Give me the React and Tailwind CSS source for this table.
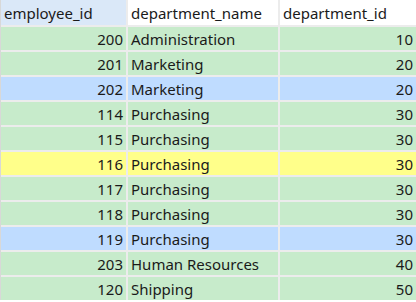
const rows = [
  [200, 'Administration', 10, 'g'],
  [201, 'Marketing', 20, 'g'],
  [202, 'Marketing', 20, 'b'],
  [114, 'Purchasing', 30, 'g'],
  [115, 'Purchasing', 30, 'g'],
  [116, 'Purchasing', 30, 'y'],
  [117, 'Purchasing', 30, 'g'],
  [118, 'Purchasing', 30, 'g'],
  [119, 'Purchasing', 30, 'b'],
  [203, 'Human Resources', 40, 'g'],
  [120, 'Shipping', 50, 'g'],
]

const bg = { g: 'bg-[#c7ebcb]', b: 'bg-[#bfdcff]', y: 'bg-[#ffff8a]' }

export default function App() {
  return (
    <div className="w-[416px] h-[302px] bg-white overflow-hidden text-[15px] text-[#1a1a1a]" style={{ fontFamily: '"Noto Sans", "Liberation Sans", sans-serif' }}>
      <div className="grid grid-cols-[125px_150px_1fr] gap-[2px] bg-[#ececec] border-l border-[#d8d8d8]">
        <div className="h-[25px] px-[3px] pt-[1px] flex items-center bg-[#dae8f8]">employee_id</div>
        <div className="h-[25px] px-[3px] pt-[1px] flex items-center bg-white">department_name</div>
        <div className="h-[25px] px-[3px] pt-[1px] flex items-center bg-white">department_id</div>
        {rows.map(([id, name, dep, c], i) => (
          <div key={i} className="contents">
            <div className={`h-[23px] px-[3px] pt-[2px] flex items-center justify-end ${bg[c]}`}>{id}</div>
            <div className={`h-[23px] px-[3px] pt-[2px] flex items-center ${bg[c]}`}>{name}</div>
            <div className={`h-[23px] px-[3px] pt-[2px] flex items-center justify-end ${bg[c]}`}>{dep}</div>
          </div>
        ))}
      </div>
    </div>
  )
}
